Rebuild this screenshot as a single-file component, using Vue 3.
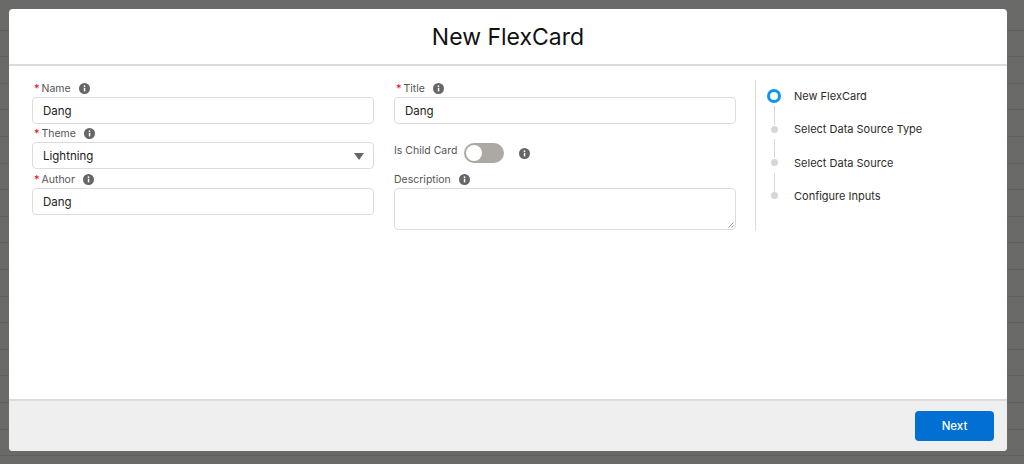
<script setup>
const rowCount = 18
const steps = [
  { label: 'New FlexCard', active: true },
  { label: 'Select Data Source Type' },
  { label: 'Select Data Source' },
  { label: 'Configure Inputs' }
]
</script>

<template>
  <div class="page">
    <div class="table">
      <div v-for="n in rowCount" :key="n" class="table-row"></div>
      <div class="table-row text-row"><span class="date">05/28/2021 09:44</span><span class="owner">Dario Consilli</span></div>
    </div>

    <section class="modal">
      <header class="modal-header"><h1>New FlexCard</h1></header>
      <div class="modal-body">
        <div class="form">
          <div class="column">
            <div class="label-row"><span class="req">*</span><span>Name</span><svg class="info gap-name" viewBox="0 0 11 11"><circle cx="5.5" cy="5.5" r="5.5"/><rect x="4.8" y="4.8" width="1.5" height="3.6"/><circle cx="5.5" cy="3.2" r=".85"/></svg></div>
            <div class="field">Dang</div>
            <div class="label-row second"><span class="req">*</span><span>Theme</span><svg class="info gap-theme" viewBox="0 0 11 11"><circle cx="5.5" cy="5.5" r="5.5"/><rect x="4.8" y="4.8" width="1.5" height="3.6"/><circle cx="5.5" cy="3.2" r=".85"/></svg></div>
            <div class="field select">Lightning<span class="caret"></span></div>
            <div class="label-row third"><span class="req">*</span><span>Author</span><svg class="info gap-author" viewBox="0 0 11 11"><circle cx="5.5" cy="5.5" r="5.5"/><rect x="4.8" y="4.8" width="1.5" height="3.6"/><circle cx="5.5" cy="3.2" r=".85"/></svg></div>
            <div class="field">Dang</div>
          </div>

          <div class="column">
            <div class="label-row"><span class="req">*</span><span>Title</span><svg class="info gap-title" viewBox="0 0 11 11"><circle cx="5.5" cy="5.5" r="5.5"/><rect x="4.8" y="4.8" width="1.5" height="3.6"/><circle cx="5.5" cy="3.2" r=".85"/></svg></div>
            <div class="field">Dang</div>
            <div class="toggle-row">
              <span class="toggle-label">Is Child Card</span>
              <span class="toggle"><span class="knob"></span></span>
              <svg class="info gap-toggle" viewBox="0 0 11 11"><circle cx="5.5" cy="5.5" r="5.5"/><rect x="4.8" y="4.8" width="1.5" height="3.6"/><circle cx="5.5" cy="3.2" r=".85"/></svg>
            </div>
            <div class="label-row desc"><span>Description</span><svg class="info gap-desc" viewBox="0 0 11 11"><circle cx="5.5" cy="5.5" r="5.5"/><rect x="4.8" y="4.8" width="1.5" height="3.6"/><circle cx="5.5" cy="3.2" r=".85"/></svg></div>
            <div class="field area">
              <svg class="grip" viewBox="0 0 6 6"><path d="M0.5 5.5 L5.5 0.5 M3.5 5.5 L5.5 3.5"/></svg>
            </div>
          </div>
        </div>

        <ol class="steps">
          <li v-for="(step, i) in steps" :key="step.label" class="step">
            <span class="rail">
              <span :class="step.active ? 'ring' : 'dot'"></span>
              <span v-if="i < steps.length - 1" class="line"></span>
            </span>
            <span class="step-label">{{ step.label }}</span>
          </li>
        </ol>
      </div>
      <footer class="modal-footer"><button class="next" type="button">Next</button></footer>
    </section>
  </div>
</template>

<style scoped>
.page {
  position: relative;
  width: 1024px;
  height: 464px;
  overflow: hidden;
  background: #6a6a69;
  font-family: Inter, "Liberation Sans", sans-serif;
}
.table { padding-top: 4px; }
.table-row {
  height: 26.6px;
  border-bottom: 1px solid #5f5f5e;
  box-sizing: border-box;
  position: relative;
}
.text-row { font-size: 11px; color: #1d1d1d; }
.date { position: absolute; left: 383px; top: 8px; }
.owner { position: absolute; left: 678px; top: 8px; }

.modal {
  position: absolute;
  left: 9px;
  top: 9px;
  width: 998px;
  height: 442px;
  display: flex;
  flex-direction: column;
  background: #fff;
  border-radius: 4px;
  overflow: hidden;
}
.modal-header {
  height: 57px;
  box-sizing: border-box;
  border-bottom: 2px solid #dcdcdc;
  display: flex;
  align-items: center;
  justify-content: center;
}
h1 {
  margin: 0;
  font-size: 23px;
  font-weight: 400;
  color: #111;
  padding-top: 1px;
}
.modal-body {
  flex: 1;
  display: flex;
  padding: 14px 0 0 23px;
  align-items: flex-start;
}
.form {
  display: grid;
  grid-template-columns: 342px 342px;
  column-gap: 20px;
}
.column { display: flex; flex-direction: column; }
.label-row {
  height: 17px;
  display: flex;
  align-items: center;
  font-size: 10.5px;
  color: #555;
}
.req { color: #e3061c; margin-right: 2px; font-size: 11px; margin-left: 2px; line-height: 1; }
.second { margin-top: 1px; }
.third { margin-top: 2px; }
.desc { margin-top: 8px; }
.info { width: 11px; height: 11px; flex: none; }
.info circle:first-child { fill: #666; }
.info rect, .info circle + rect + circle { fill: #fff; }
.gap-name { margin-left: 8px; }
.gap-theme { margin-left: 8px; }
.gap-author { margin-left: 8px; }
.gap-title { margin-left: 8px; }
.gap-desc { margin-left: 8px; }
.gap-toggle { margin-left: 15px; }
.field {
  height: 27px;
  box-sizing: border-box;
  border: 1px solid #dcdcdc;
  border-radius: 4px;
  padding: 0 10px;
  display: flex;
  align-items: center;
  justify-content: space-between;
  font-size: 11.5px;
  color: #222;
  background: #fff;
  position: relative;
}
.caret {
  width: 0;
  height: 0;
  border-left: 5.5px solid transparent;
  border-right: 5.5px solid transparent;
  border-top: 7px solid #666;
  margin-right: -1px;
  margin-top: 1px;
}
.area { height: 42px; }
.grip {
  position: absolute;
  right: 1px;
  bottom: 1px;
  width: 6px;
  height: 6px;
  fill: none;
  stroke: #777;
  stroke-width: .8;
}
.toggle-row {
  height: 20px;
  margin-top: 19px;
  display: flex;
  align-items: center;
}
.toggle-label { font-size: 10.5px; color: #555; margin-right: 7px; margin-top: -5px; }
.toggle {
  width: 40px;
  height: 20px;
  box-sizing: border-box;
  background: #aca8a4;
  border-radius: 10px;
  padding: 2px;
  display: flex;
}
.knob { width: 16px; height: 16px; border-radius: 50%; background: #fff; }
.steps {
  list-style: none;
  margin: 0 0 0 19px;
  padding: 0 0 0 11px;
  border-left: 1px solid #dedede;
  height: 151px;
  box-sizing: border-box;
  padding-top: 9px;
  margin-top: 0;
}
.step {
  height: 33.3px;
  display: flex;
  font-size: 11px;
  color: #2b2b2b;
}
.rail {
  width: 14px;
  display: flex;
  flex-direction: column;
  align-items: center;
  position: relative;
  margin-right: 13px;
}
.ring {
  width: 14px;
  height: 14px;
  box-sizing: border-box;
  border: 3.5px solid #0a95f6;
  border-radius: 50%;
  background: #fff;
}
.dot {
  width: 7px;
  height: 7px;
  margin-top: 3.5px;
  border-radius: 50%;
  background: #d6d6d6;
}
.line {
  position: absolute;
  top: 17px;
  left: 6.5px;
  width: 1.5px;
  height: 19px;
  background: #d8d8d8;
}
.step-label { line-height: 14px; }
.modal-footer {
  height: 52px;
  box-sizing: border-box;
  border-top: 2px solid #dcdcdc;
  background: #efefef;
  display: flex;
  justify-content: flex-end;
  align-items: center;
  padding: 0 13px 0 0;
}
.next {
  width: 79px;
  height: 30px;
  border: 0;
  border-radius: 4px;
  background: #0170d2;
  color: #fff;
  font-family: inherit;
  font-size: 11.5px;
  font-weight: 500;
  margin-top: 0;
}
</style>
